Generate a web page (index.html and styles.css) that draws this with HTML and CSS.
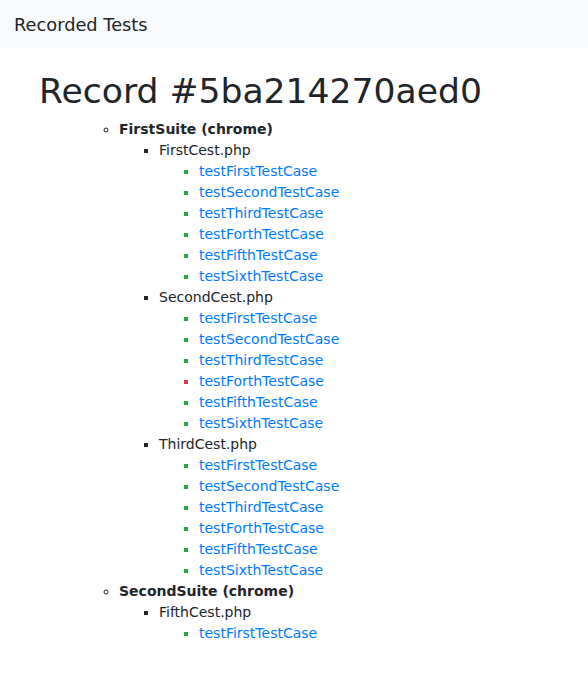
FILE: index.html
```html
<!DOCTYPE html>
<html>
<head>
<meta charset="utf-8">
<link rel="stylesheet" href="styles.css">
</head>
<body>
<nav class="navbar"><span class="brand">Recorded Tests</span></nav>
<main class="container">
<h1 class="title">Record #5ba214270aed0</h1>
<ul class="suites">
  <li class="suite"><strong>FirstSuite (chrome)</strong>
    <ul class="cests">
      <li>FirstCest.php
        <ul class="tests">
          <li class="pass"><a href="#">testFirstTestCase</a></li>
          <li class="pass"><a href="#">testSecondTestCase</a></li>
          <li class="pass"><a href="#">testThirdTestCase</a></li>
          <li class="pass"><a href="#">testForthTestCase</a></li>
          <li class="pass"><a href="#">testFifthTestCase</a></li>
          <li class="pass"><a href="#">testSixthTestCase</a></li>
        </ul>
      </li>
      <li>SecondCest.php
        <ul class="tests">
          <li class="pass"><a href="#">testFirstTestCase</a></li>
          <li class="pass"><a href="#">testSecondTestCase</a></li>
          <li class="pass"><a href="#">testThirdTestCase</a></li>
          <li class="fail"><a href="#">testForthTestCase</a></li>
          <li class="pass"><a href="#">testFifthTestCase</a></li>
          <li class="pass"><a href="#">testSixthTestCase</a></li>
        </ul>
      </li>
      <li>ThirdCest.php
        <ul class="tests">
          <li class="pass"><a href="#">testFirstTestCase</a></li>
          <li class="pass"><a href="#">testSecondTestCase</a></li>
          <li class="pass"><a href="#">testThirdTestCase</a></li>
          <li class="pass"><a href="#">testForthTestCase</a></li>
          <li class="pass"><a href="#">testFifthTestCase</a></li>
          <li class="pass"><a href="#">testSixthTestCase</a></li>
        </ul>
      </li>
    </ul>
  </li>
  <li class="suite"><strong>SecondSuite (chrome)</strong>
    <ul class="cests">
      <li>FifthCest.php
        <ul class="tests">
          <li class="pass"><a href="#">testFirstTestCase</a></li>
        </ul>
      </li>
    </ul>
  </li>
</ul>
</main>
</body>
</html>
```
FILE: styles.css
```css
html, body {
  margin: 0;
  padding: 0;
}
body {
  font-family: "DejaVu Sans", sans-serif;
  font-size: 14px;
  line-height: 21px;
  color: #212529;
  background: #fff;
}
.navbar {
  background: #f8f9fa;
  height: 48px;
  display: flex;
  align-items: center;
  padding: 1px 14px 0;
  box-sizing: border-box;
}
.brand {
  font-size: 17.8px;
  color: #212529;
}
.container {
  padding: 0 39px;
}
.title {
  font-size: 34.6px;
  font-weight: 400;
  line-height: 42px;
  margin: 22px 0 7px;
}
ul {
  margin: 0;
  padding-left: 40px;
}
.suites {
  padding-left: 80px;
  list-style: circle;
}
.suite strong {
  font-weight: 700;
}
.cests, .tests {
  list-style: square;
}
a {
  color: #007bff;
  text-decoration: none;
}
.pass::marker {
  color: #28a745;
}
.fail::marker {
  color: #dc3545;
}
```
